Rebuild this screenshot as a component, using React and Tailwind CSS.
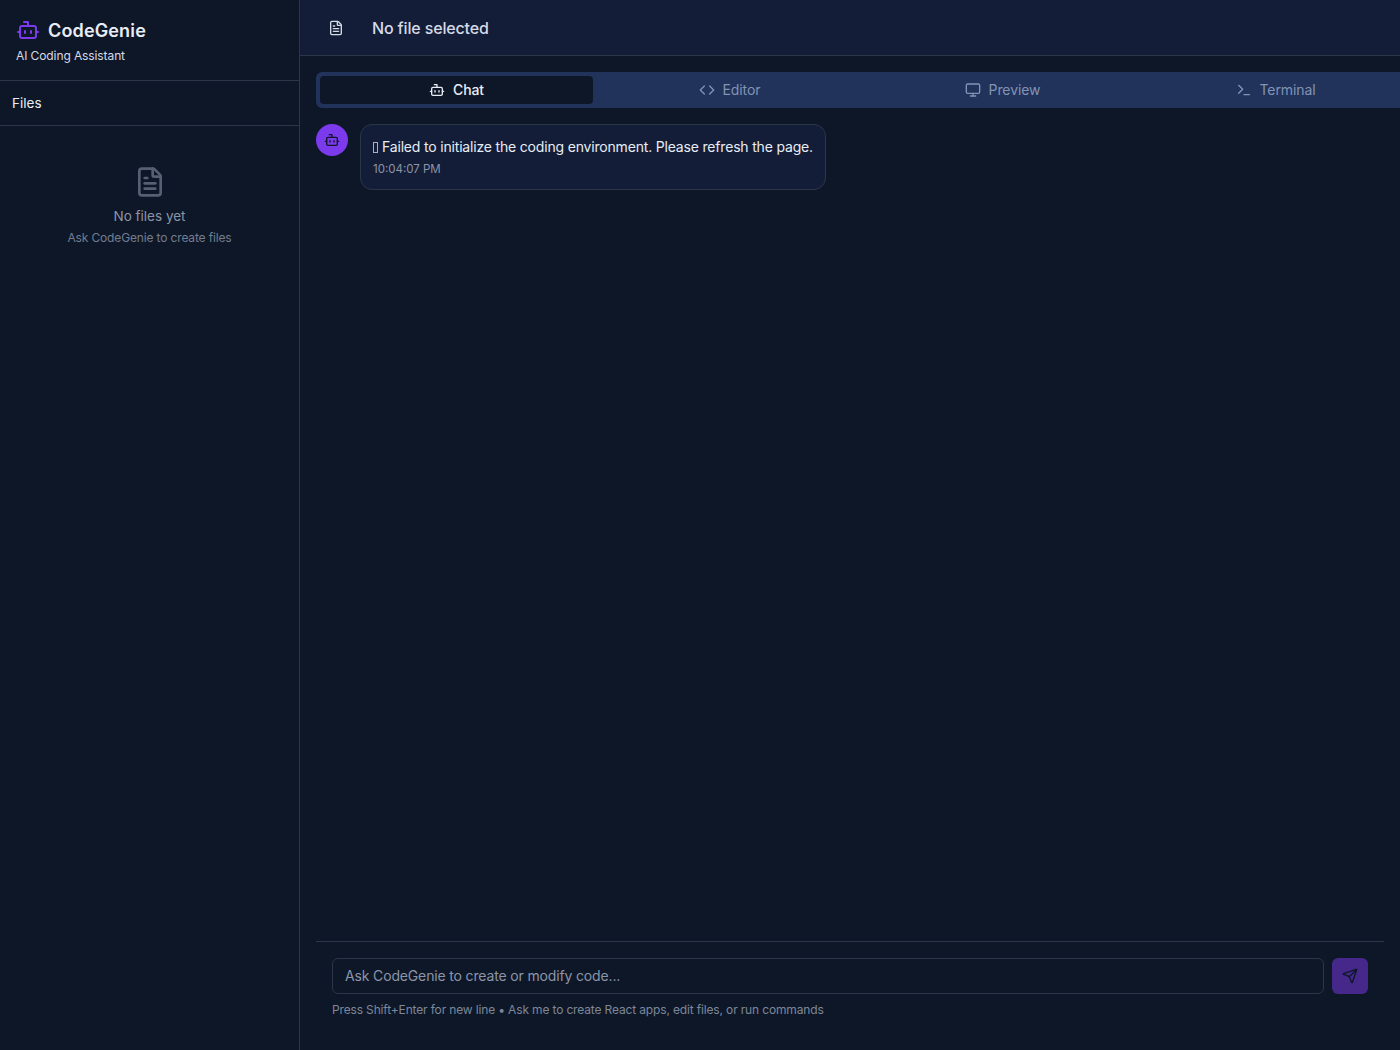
import { Bot, FileText, Code, Monitor, Terminal, Send } from 'lucide-react'

const tabs = [
  { label: 'Chat', icon: Bot, active: true },
  { label: 'Editor', icon: Code },
  { label: 'Preview', icon: Monitor },
  { label: 'Terminal', icon: Terminal },
]

function App() {
  return (
    <div className="h-screen flex overflow-hidden bg-[#0e1728] text-[#f1f5f9] font-['Inter',sans-serif]">
      {/* Sidebar */}
      <aside className="w-[300px] shrink-0 flex flex-col border-r border-[#2c3648]">
        <div className="h-[81px] px-4 pt-[18px] border-b border-[#2c3648]">
          <div className="flex items-center gap-2">
            <Bot className="w-6 h-6 text-[#7c3aed]" />
            <h1 className="text-lg leading-6 font-semibold tracking-[0.15px] text-[#e8edf5] translate-y-px">CodeGenie</h1>
          </div>
          <p className="mt-[6px] text-xs leading-4 tracking-[-0.1px] text-[#d5dbe5]">AI Coding Assistant</p>
        </div>
        <div className="h-[45px] px-3 flex items-center border-b border-[#2c3648]">
          <span className="text-[13.5px] text-[#e8edf5]">Files</span>
        </div>
        <div className="flex flex-col items-center pt-[40px]">
          <FileText className="w-8 h-8 text-[#566072]" />
          <p className="mt-2 text-[13.5px] leading-5 text-[#8b95a7]">No files yet</p>
          <p className="mt-1 text-xs leading-4 tracking-[-0.15px] text-[#727d90]">Ask CodeGenie to create files</p>
        </div>
      </aside>

      {/* Main */}
      <main className="flex-1 min-w-0 flex flex-col">
        <header className="h-[56px] shrink-0 flex items-center pl-[28px] bg-[#131d38] border-b border-[#2c3648]">
          <FileText className="w-4 h-4 text-[#d5dbe5]" />
          <span className="ml-[28px] text-base tracking-[-0.15px] font-[450] text-[#d5dbe5]">No file selected</span>
        </header>

        <div className="flex-1 min-h-0 flex flex-col px-4 pt-4">
          <div className="w-[1100px] shrink-0 h-9 p-1 grid grid-cols-4 rounded-md bg-[#21325b]">
            {tabs.map((tab) => (
              <div
                key={tab.label}
                className={tab.active
                  ? 'flex items-center justify-center gap-2 rounded-[4px] bg-[#0e1728] text-sm tracking-[-0.1px] font-[450] text-[#e8edf5]'
                  : 'flex items-center justify-center gap-2 rounded-[4px] text-sm tracking-[-0.1px] text-[#8294b4]'}
              >
                <tab.icon className="w-4 h-4" />
                {tab.label}
              </div>
            ))}
          </div>

          {/* Messages */}
          <div className="flex-1 min-h-0 pt-4 flex gap-3 items-start">
            <div className="w-8 h-8 rounded-full bg-[#7c3aed] flex items-center justify-center">
              <Bot className="w-4 h-4 text-[#0e1728]" />
            </div>
            <div className="px-3 py-3 rounded-xl border border-[#2c3648] bg-[#131d38]">
              <p className="flex items-center text-sm leading-5 tracking-[-0.18px] text-[#e8edf5]">
                <span className="w-[5px] h-[11px] mr-1 border border-[#a9b1bf]" />
                Failed to initialize the coding environment. Please refresh the page.
              </p>
              <p className="mt-1 text-[11.5px] leading-4 text-[#8b95a7]">10:04:07 PM</p>
            </div>
          </div>

          {/* Input */}
          <div className="shrink-0 border-t border-[#2c3648] px-4 pt-4 pb-8">
            <div className="flex gap-2">
              <input
                readOnly
                placeholder="Ask CodeGenie to create or modify code..."
                className="flex-1 h-9 px-3 pb-px rounded-md border border-[#2c3648] bg-transparent text-sm tracking-[-0.15px] placeholder:text-[#8b95a7] outline-none"
              />
              <button className="w-9 h-9 rounded-md bg-[#46288b] flex items-center justify-center">
                <Send className="w-4 h-4 text-[#0e1728]" />
              </button>
            </div>
            <p className="mt-2 text-xs leading-4 tracking-[-0.15px] text-[#7d8799]">Press Shift+Enter for new line • Ask me to create React apps, edit files, or run commands</p>
          </div>
        </div>
      </main>
    </div>
  )
}

export default App
